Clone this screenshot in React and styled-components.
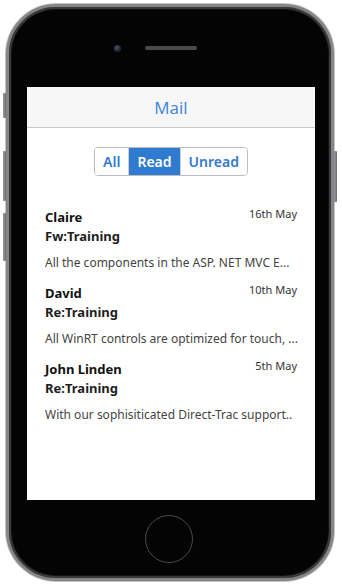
import styled, { createGlobalStyle } from "styled-components";

const GlobalStyle = createGlobalStyle`
  html, body {
    margin: 0;
    padding: 0;
    background: #ffffff;
  }
  body {
    font-family: "Noto Sans", "Open Sans", sans-serif;
  }
`;

const mails = [
  {
    name: "Claire",
    date: "16th May",
    subject: "Fw:Training",
    text: "All the components in the ASP. NET MVC E...",
  },
  {
    name: "David",
    date: "10th May",
    subject: "Re:Training",
    text: "All WinRT controls are optimized for touch, ...",
  },
  {
    name: "John Linden",
    date: "5th May",
    subject: "Re:Training",
    text: "With our sophisiticated Direct-Trac support..",
  },
];

const tabs = ["All", "Read", "Unread"];

function App() {
  return (
    <>
      <GlobalStyle />
      <Stage>
        <Phone>
          <SideKey $side="left" $top={86} $height={25} />
          <SideKey $side="left" $top={144} $height={50} />
          <SideKey $side="left" $top={206} $height={48} />
          <SideKey $side="right" $top={144} $height={51} />
          <TopBezel>
            <Camera />
            <Speaker />
          </TopBezel>
          <Screen>
            <Header>Mail</Header>
            <Content>
              <Segments>
                {tabs.map((t) => (
                  <Segment key={t} $active={t === "Read"}>
                    {t}
                  </Segment>
                ))}
              </Segments>
              <List>
                {mails.map((m) => (
                  <Item key={m.name}>
                    <Top>
                      <Name>{m.name}</Name>
                      <Date>{m.date}</Date>
                    </Top>
                    <Subject>{m.subject}</Subject>
                    <Preview>{m.text}</Preview>
                  </Item>
                ))}
              </List>
            </Content>
          </Screen>
          <BottomBezel>
            <HomeButton />
          </BottomBezel>
        </Phone>
      </Stage>
    </>
  );
}

export default App;

const Stage = styled.div`
  width: 342px;
  height: 588px;
  padding: 4px 0 0 6px;
  box-sizing: border-box;
`;

const Phone = styled.div`
  position: relative;
  width: 328px;
  height: 577px;
  box-sizing: border-box;
  border-radius: 50px;
  border: 3px solid #858588;
  background: #040404;
  box-shadow: inset 0 0 0 2px #3a3a3c, inset 0 0 0 3px #111, 0 0 0 1px #c4c4c6;
  display: flex;
  flex-direction: column;
`;

const SideKey = styled.div`
  position: absolute;
  top: ${(p) => p.$top}px;
  ${(p) => (p.$side === "left" ? "left: -6px;" : "right: -6px;")}
  width: 3px;
  height: ${(p) => p.$height}px;
  background: linear-gradient(90deg, #9a9a9c, #6e6e70);
  border-radius: 1px;
`;

const TopBezel = styled.div`
  height: 80px;
  display: flex;
  align-items: center;
  justify-content: center;
  gap: 24px;
  padding-right: 30px;
  padding-top: 2px;
  box-sizing: border-box;
`;

const Camera = styled.div`
  width: 7px;
  height: 7px;
  border-radius: 50%;
  background: radial-gradient(circle at 40% 40%, #4a5070, #1c1e2c 70%);
`;

const Speaker = styled.div`
  width: 52px;
  height: 4px;
  border-radius: 2px;
  background: #4a4a4c;
`;

const Screen = styled.div`
  margin: 0 16px 0 18px;
  height: 413px;
  background: #ffffff;
  display: flex;
  flex-direction: column;
  overflow: hidden;
`;

const Header = styled.div`
  height: 40px;
  flex-shrink: 0;
  background: #f7f7f7;
  border-bottom: 1px solid #c9c9c9;
  display: flex;
  align-items: center;
  justify-content: center;
  font-family: "Open Sans", "Noto Sans", sans-serif;
  font-size: 17px;
  color: #3d85dc;
`;

const Content = styled.div`
  display: flex;
  flex-direction: column;
  align-items: center;
  padding-top: 19px;
`;

const Segments = styled.div`
  display: flex;
  height: 29px;
  box-sizing: border-box;
  border: 1px solid #bdbdbd;
  border-radius: 4px;
  overflow: hidden;
`;

const Segment = styled.div`
  display: flex;
  align-items: center;
  padding: 0 8px;
  font-size: 14px;
  font-weight: 600;
  color: ${(p) => (p.$active ? "#ffffff" : "#3179d2")};
  background: ${(p) => (p.$active ? "#2e7bcf" : "#ffffff")};
  & + & {
    border-left: 1px solid #d0d0d0;
  }
`;

const List = styled.div`
  align-self: stretch;
  display: flex;
  flex-direction: column;
  padding: 31px 18px 0;
`;

const Item = styled.div`
  display: flex;
  flex-direction: column;
  padding-bottom: 10px;
`;

const Top = styled.div`
  display: flex;
  justify-content: space-between;
  align-items: flex-start;
`;

const Name = styled.div`
  font-size: 13px;
  font-weight: 700;
  line-height: 20px;
  color: #111111;
`;

const Date = styled.div`
  font-size: 11px;
  line-height: 14px;
  color: #333333;
`;

const Subject = styled.div`
  font-size: 13px;
  font-weight: 700;
  line-height: 19px;
  color: #1e1e1e;
`;

const Preview = styled.div`
  margin-top: 7px;
  font-size: 12px;
  line-height: 20px;
  color: #444444;
  white-space: nowrap;
`;

const BottomBezel = styled.div`
  flex: 1;
  display: flex;
  align-items: center;
  justify-content: center;
  padding-right: 2px;
`;

const HomeButton = styled.div`
  width: 48px;
  height: 48px;
  box-sizing: border-box;
  border-radius: 50%;
  border: 1.5px solid #4a4a4c;
`;
